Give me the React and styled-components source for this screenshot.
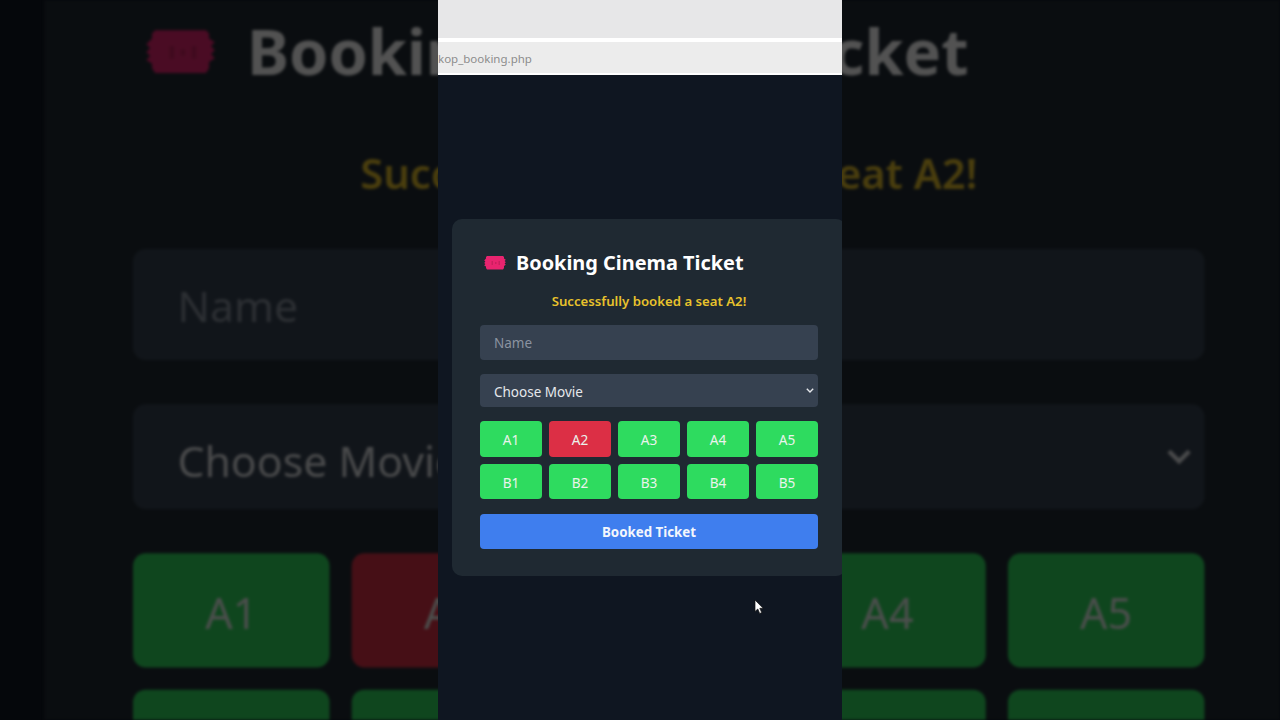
import React from "react";
import styled, { createGlobalStyle } from "styled-components";

const Global = createGlobalStyle`
  html, body { margin: 0; padding: 0; background: #05070b; }
  body { font-family: "Noto Sans", "Open Sans", sans-serif; }
  * { box-sizing: border-box; }
`;

const Stage = styled.div`
  position: relative;
  width: 1280px;
  height: 720px;
  overflow: hidden;
  display: flex;
  justify-content: center;
  background: #05070b;
`;

const Backdrop = styled.div`
  position: absolute;
  inset: 0;
  overflow: hidden;
  filter: brightness(0.32) blur(1.4px);
`;

const BackdropPage = styled.div`
  width: 1280px;
  padding: 219px 0 0 452px;
  transform-origin: 0 0;
  transform: matrix(3.17, 0, 0, 3.17, -1388.6, -781.25);
`;

const Phone = styled.div`
  position: relative;
  flex: none;
  width: 404px;
  height: 720px;
  overflow: hidden;
  display: flex;
  flex-direction: column;
  background: #0f1621;
`;

const BrowserTop = styled.div`
  flex: none;
  height: 38px;
  background: #e7e7e8;
`;

const AddressBar = styled.div`
  flex: none;
  height: 37px;
  padding-top: 2px;
  border-top: 4px solid #fff;
  border-bottom: 2px solid #fff;
  background: #ececec;
  display: flex;
  align-items: center;
  color: #8c8c8c;
  font-size: 11.5px;
  line-height: 1;
`;

const PageBody = styled.main`
  flex: 1;
  padding: 144px 0 0 14px;
`;

const Card = styled.section`
  width: 394px;
  height: 357px;
  padding: 28px;
  border-radius: 10px;
  background: #1f2932;
`;

const Title = styled.h1`
  margin: 0 0 14px;
  display: flex;
  align-items: center;
  gap: 10.5px;
  height: 30px;
  padding: 2px 0 0 3.5px;
  color: #fff;
  font-size: 19.9px;
  font-weight: 700;
  line-height: 28px;
  white-space: nowrap;
`;

const TicketIcon = styled.svg`
  flex: none;
  width: 22px;
  height: 16px;
`;

const Success = styled.p`
  margin: 0 0 14px;
  height: 20px;
  color: #e8c22c;
  font-size: 13.2px;
  font-weight: 600;
  line-height: 20px;
  text-align: center;
  white-space: nowrap;
`;

const NameInput = styled.input`
  display: block;
  width: 100%;
  height: 35px;
  margin: 0 0 14px;
  padding: 0 14px;
  border: 0;
  border-radius: 4px;
  background: #364150;
  color: #e5e7eb;
  font: 400 13.5px "Noto Sans", sans-serif;
  &::placeholder { color: #8b93a0; opacity: 1; }
`;

const SelectWrap = styled.div`
  position: relative;
  margin: 0 0 14px;
`;

const MovieSelect = styled.select`
  display: block;
  width: 100%;
  height: 33px;
  padding: 2px 14px 0;
  border: 0;
  border-radius: 4px;
  appearance: none;
  background: #364150;
  color: #e5e7eb;
  font: 400 13.5px "Noto Sans", sans-serif;
`;

const Chevron = styled.svg`
  position: absolute;
  right: 4px;
  top: 14px;
  width: 8px;
  height: 5px;
  pointer-events: none;
`;

const SeatGrid = styled.div`
  display: grid;
  grid-template-columns: repeat(5, 62px);
  grid-auto-rows: 35.5px;
  gap: 7px;
  margin-bottom: 14.5px;
`;

const Seat = styled.button`
  padding: 2px 0 0;
  border: 0;
  border-radius: 4px;
  background: ${(p) => (p.$taken ? "#dc2f45" : "#2edb5f")};
  color: #eaf3ec;
  font: 400 13.6px "Noto Sans", sans-serif;
`;

const SubmitButton = styled.button`
  display: block;
  width: 100%;
  height: 35px;
  padding: 2px 0 0;
  border: 0;
  border-radius: 4px;
  background: #3f7eee;
  color: #f3f6fc;
  font: 700 13.3px "Noto Sans", sans-serif;
`;

const Cursor = styled.svg`
  position: absolute;
  left: 754px;
  top: 599px;
  width: 10px;
  height: 16px;
`;

const seats = ["A1", "A2", "A3", "A4", "A5", "B1", "B2", "B3", "B4", "B5"];

function Ticket() {
  return (
    <TicketIcon viewBox="0 0 22 16" aria-hidden="true">
      <path
        fill="#e8246f"
        d="M3 1h16l1 1v1.600l1.800 1.200-1.200 1.200 1.200 1.300-1.200 1.200 1.200 1.300-1.800 1.200V13l-1 1.500H3L2 13v-1.400L.2 10.400l1.200-1.300-1.200-1.200 1.200-1.300-1.200-1.200L2 3.600V2z"
      />
      <path fill="#c9205f" d="M7.500 6h1.500v4H7.500zM11 7h1.500v2H11zM14.500 6H16v4h-1.500z" />
    </TicketIcon>
  );
}

function BookingCard() {
  return (
    <Card>
      <Title>
        <Ticket />
        Booking Cinema Ticket
      </Title>
      <Success>Successfully booked a seat A2!</Success>
      <NameInput placeholder="Name" readOnly />
      <SelectWrap>
        <MovieSelect defaultValue="">
          <option value="">Choose Movie</option>
        </MovieSelect>
        <Chevron viewBox="0 0 8 5" aria-hidden="true">
          <path d="M.8.8 4 4 7.200.8" fill="none" stroke="#e5e7eb" strokeWidth="1.400" />
        </Chevron>
      </SelectWrap>
      <SeatGrid>
        {seats.map((s) => (
          <Seat key={s} $taken={s === "A2"}>{s}</Seat>
        ))}
      </SeatGrid>
      <SubmitButton>Booked Ticket</SubmitButton>
    </Card>
  );
}

export default function App() {
  return (
    <Stage>
      <Global />
      <Backdrop aria-hidden="true">
        <BackdropPage>
          <BookingCard />
        </BackdropPage>
      </Backdrop>
      <Phone>
        <BrowserTop />
        <AddressBar>kop_booking.php</AddressBar>
        <PageBody>
          <BookingCard />
        </PageBody>
      </Phone>
      <Cursor viewBox="0 0 10 16" aria-hidden="true">
        <path fill="#fff" stroke="#111" strokeWidth="0.7" d="M1 1v11.500l2.800-2.500 1.900 4.500 2-.9L5.800 9.300H9.200z" />
      </Cursor>
    </Stage>
  );
}
